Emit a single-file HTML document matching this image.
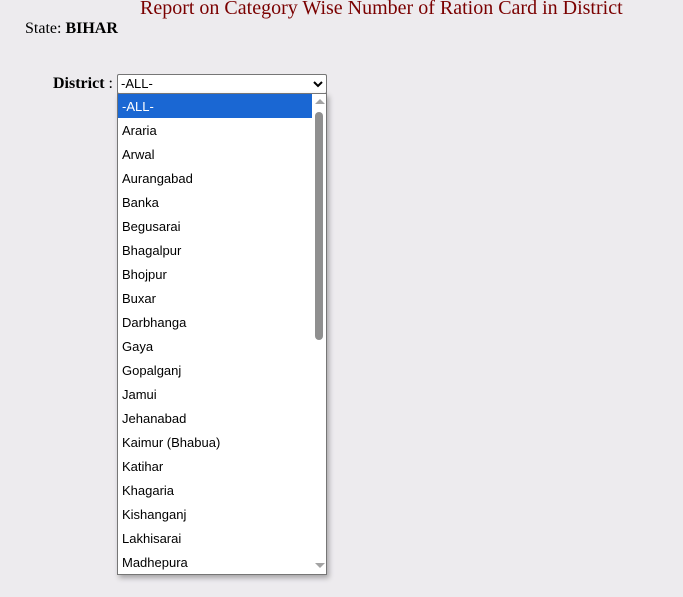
<!DOCTYPE html>
<html><head><style>
html,body{margin:0;padding:0;}
body{width:683px;height:597px;background:#edebee;position:relative;overflow:hidden;font-family:"Liberation Serif",serif;}
.title{position:absolute;left:140px;top:-3px;font-size:20px;color:#7a0000;white-space:nowrap;}
.state{position:absolute;left:25px;top:20px;font-size:16px;color:#000;}
.dl{position:absolute;left:53px;top:75px;font-size:16px;}
.sel{position:absolute;left:117px;top:74px;width:208px;height:18px;border:1px solid #767676;border-radius:2px;background:#fff;font-family:"Liberation Sans",sans-serif;font-size:13px;line-height:18px;box-sizing:content-box;}
.sel span{position:absolute;left:3px;top:0;}
.sel svg{position:absolute;right:3px;top:5px;}
.list{position:absolute;left:117px;top:93px;width:208px;height:480px;border:1px solid #767676;background:#fff;box-shadow:2px 3px 5px rgba(0,0,0,0.3);font-family:"Liberation Sans",sans-serif;font-size:13px;overflow:hidden;}
.it{height:24px;line-height:26px;padding-left:4px;color:#000;width:190px;}
.it.s{background:#1a67d3;color:#fff;width:190px;}
.sb{position:absolute;left:194px;top:0;width:14px;height:480px;background:#fff;}
.th{position:absolute;left:3px;top:18px;width:8px;height:228px;background:#8f8f8f;border-radius:4px;}
.au{position:absolute;left:3px;top:5px;width:0;height:0;border-left:5px solid transparent;border-right:5px solid transparent;border-bottom:5px solid #a3a3a3;}
.ad{position:absolute;left:3px;top:469px;width:0;height:0;border-left:5px solid transparent;border-right:5px solid transparent;border-top:5px solid #a3a3a3;}
</style></head><body>
<div class="title">Report on Category Wise Number of Ration Card in District</div>
<div class="state">State: <b>BIHAR</b></div>
<div class="dl"><b>District</b> :</div>
<div class="sel"><span>-ALL-</span><svg width="10" height="8" viewBox="0 0 10 8"><path d="M1 2 L5 6 L9 2" stroke="#000" stroke-width="2" fill="none"/></svg></div>
<div class="list">
<div class="it s">-ALL-</div>
<div class="it">Araria</div>
<div class="it">Arwal</div>
<div class="it">Aurangabad</div>
<div class="it">Banka</div>
<div class="it">Begusarai</div>
<div class="it">Bhagalpur</div>
<div class="it">Bhojpur</div>
<div class="it">Buxar</div>
<div class="it">Darbhanga</div>
<div class="it">Gaya</div>
<div class="it">Gopalganj</div>
<div class="it">Jamui</div>
<div class="it">Jehanabad</div>
<div class="it">Kaimur (Bhabua)</div>
<div class="it">Katihar</div>
<div class="it">Khagaria</div>
<div class="it">Kishanganj</div>
<div class="it">Lakhisarai</div>
<div class="it">Madhepura</div>
<div class="sb"><div class="au"></div><div class="th"></div><div class="ad"></div></div>
</div>
</body></html>
